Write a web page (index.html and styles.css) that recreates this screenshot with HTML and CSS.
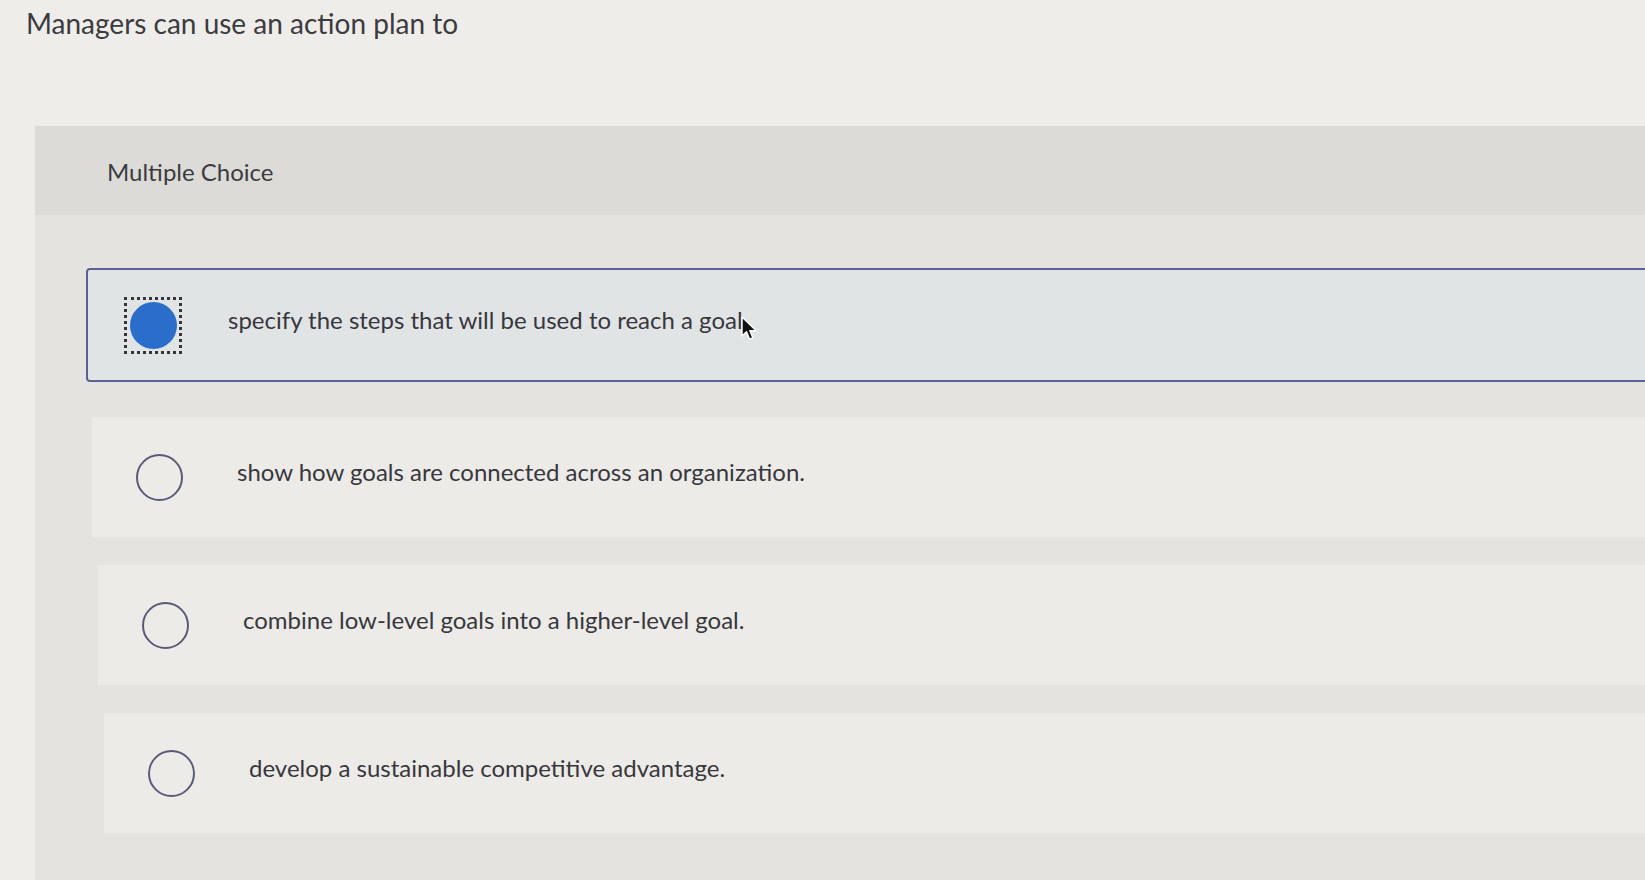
FILE: index.html
```html
<!DOCTYPE html>
<html lang="en">
<head>
<meta charset="utf-8">
<title>Multiple Choice</title>
<link rel="stylesheet" href="styles.css">
</head>
<body>
<h1 class="prompt">Managers can use an action plan to</h1>
<section class="panel">
  <div class="panel-head">Multiple Choice</div>
  <ul class="choices">
    <li class="choice selected">
      <span class="radio-wrap focus"><span class="radio checked"></span></span>
      <span class="label">specify the steps that will be used to reach a goal</span>
    </li>
    <li class="choice">
      <span class="radio-wrap"><span class="radio"></span></span>
      <span class="label">show how goals are connected across an organization.</span>
    </li>
    <li class="choice">
      <span class="radio-wrap"><span class="radio"></span></span>
      <span class="label">combine low-level goals into a higher-level goal.</span>
    </li>
    <li class="choice">
      <span class="radio-wrap"><span class="radio"></span></span>
      <span class="label">develop a sustainable competitive advantage.</span>
    </li>
  </ul>
</section>
<svg class="cursor" width="18" height="26" viewBox="0 0 18 26" aria-hidden="true">
  <path d="M1 1 L1 20 L5.5 15.8 L8.6 23.2 L11.8 21.8 L8.8 14.6 L15 14.6 Z" fill="#111" stroke="#fff" stroke-width="1.4" stroke-linejoin="round"/>
</svg>
</body>
</html>
```

FILE: styles.css
```css
html, body {
  margin: 0;
  padding: 0;
}
body {
  width: 1645px;
  height: 880px;
  overflow: hidden;
  background: #eeede9;
  font-family: Lato, "Open Sans", "Liberation Sans", sans-serif;
  color: #3b3a40;
  position: relative;
}
.prompt {
  margin: 0;
  padding: 7px 0 0 26px;
  height: 126px;
  box-sizing: border-box;
  font-size: 28px;
  font-weight: 400;
  line-height: 32px;
  color: #3c3b41;
}
.panel {
  margin-left: 35px;
  width: 1640px;
  background: #e4e3e0;
  height: 760px;
}
.panel-head {
  height: 89px;
  display: flex;
  align-items: center;
  padding: 2px 0 0 72px;
  box-sizing: border-box;
  background: #dcdbd7;
  font-size: 24px;
  color: #3c3b41;
}
.choices {
  list-style: none;
  margin: 0;
  padding: 53px 0 0 0;
}
.choice {
  display: flex;
  align-items: center;
  height: 120px;
  margin-left: 57px;
  margin-bottom: 28px;
  background: #ecebe8;
  box-sizing: border-box;
  padding-left: 38px;
}
.choice:nth-child(3) { margin-left: 63px; }
.choice:nth-child(4) { margin-left: 69px; }
.choice.selected {
  margin-left: 51px;
  height: 114px;
  margin-bottom: 35px;
  background: #e1e4e5;
  border: 2px solid #5b6097;
  border-radius: 4px;
  padding-left: 36px;
}
.radio-wrap {
  width: 58px;
  height: 57px;
  display: flex;
  align-items: center;
  justify-content: center;
  box-sizing: border-box;
  flex: none;
}
.radio-wrap.focus {
  border: 3px dotted #34343c;
}
.radio {
  width: 47px;
  height: 47px;
  border-radius: 50%;
  border: 2.2px solid #5a5a7a;
  box-sizing: border-box;
  display: block;
}
.radio.checked {
  border: none;
  background: #2b6dcb;
}
.label {
  margin-left: 49px;
  margin-top: -10px;
  font-size: 24px;
  line-height: 30px;
  color: #38373d;
  white-space: nowrap;
}
.choice.selected .label {
  margin-left: 46px;
}
.cursor {
  position: absolute;
  left: 741px;
  top: 316px;
}
```
